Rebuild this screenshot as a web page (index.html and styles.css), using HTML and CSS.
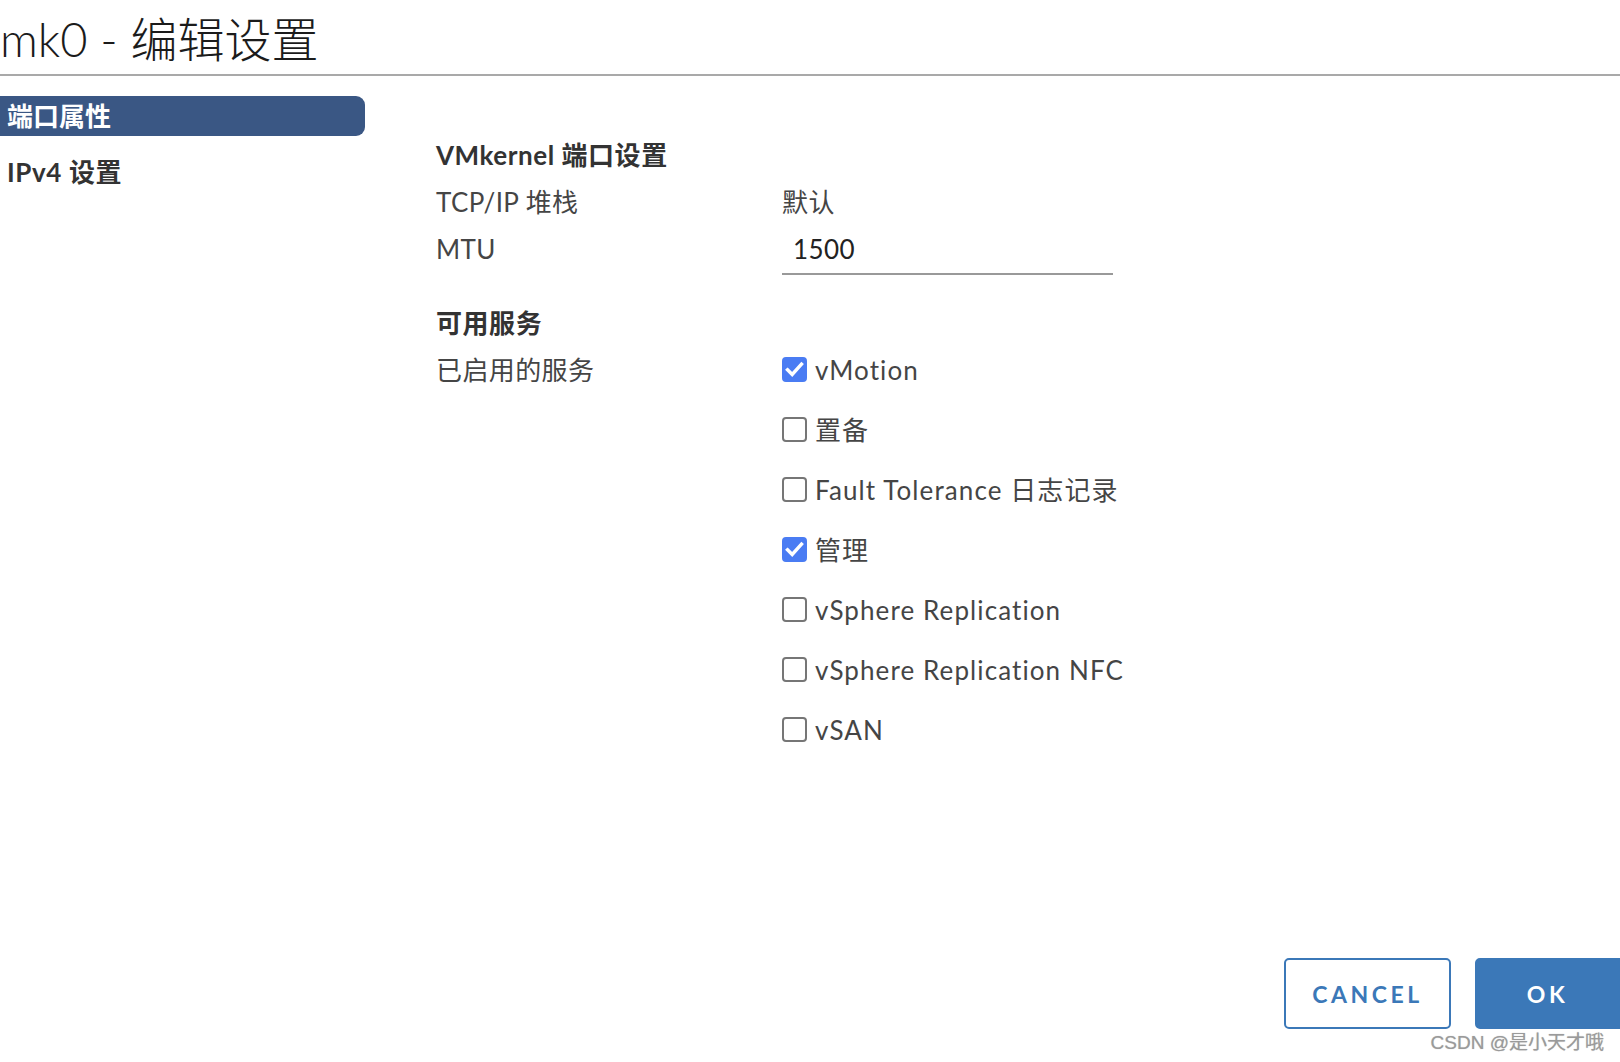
FILE: index.html
```html
<!DOCTYPE html>
<html lang="zh-CN">
<head>
<meta charset="utf-8">
<title>mk0 - 编辑设置</title>
<link rel="stylesheet" href="styles.css">
</head>
<body>
<div class="page">
  <header class="title">mk0 - 编辑设置</header>
  <div class="main">
    <nav class="side">
      <div class="nav-item active">端口属性</div>
      <div class="nav-item">IPv4 设置</div>
    </nav>
    <section class="content">
      <h2 class="sec-head">VMkernel 端口设置</h2>
      <div class="row">
        <div class="label">TCP/IP 堆栈</div>
        <div class="value">默认</div>
      </div>
      <div class="row">
        <div class="label">MTU</div>
        <div class="value"><div class="input">1500</div></div>
      </div>
      <h2 class="sec-head second">可用服务</h2>
      <div class="row">
        <div class="label">已启用的服务</div>
        <div class="value">
          <ul class="checks">
            <li><span class="cb on"><svg viewBox="0 0 25 25" width="25" height="25"><path d="M5.5 12.8 L10.2 17.5 L19.5 7.2" fill="none" stroke="#fff" stroke-width="3.4" stroke-linecap="square"/></svg></span>vMotion</li>
            <li><span class="cb"></span>置备</li>
            <li><span class="cb"></span>Fault Tolerance 日志记录</li>
            <li><span class="cb on"><svg viewBox="0 0 25 25" width="25" height="25"><path d="M5.5 12.8 L10.2 17.5 L19.5 7.2" fill="none" stroke="#fff" stroke-width="3.4" stroke-linecap="square"/></svg></span>管理</li>
            <li><span class="cb"></span>vSphere Replication</li>
            <li><span class="cb"></span>vSphere Replication NFC</li>
            <li><span class="cb"></span>vSAN</li>
          </ul>
        </div>
      </div>
    </section>
  </div>
  <footer class="footer">
    <button class="btn btn-outline">CANCEL</button>
    <button class="btn btn-primary">OK</button>
  </footer>
  <div class="watermark">CSDN @是小天才哦</div>
</div>
</body>
</html>
```
FILE: styles.css
```css
* { box-sizing: border-box; }
html, body { margin: 0; padding: 0; background: #fff; }
body {
  font-family: "Lato", "Noto Sans CJK SC", sans-serif;
  color: #454545;
}
.page {
  position: relative;
  height: 1062px;
  width: 1620px;
  display: flex;
  flex-direction: column;
  overflow: hidden;
}
.title {
  height: 76px;
  border-bottom: 2px solid #a9a9a9;
  font-size: 47px;
  font-weight: 300;
  line-height: 78px;
  color: #1b1b1b;
  padding-left: 0;
  white-space: nowrap;
}
.main {
  display: grid;
  grid-template-columns: 365px 1fr;
  column-gap: 71px;
  flex: 1;
}
.side {
  padding-top: 20px;
  display: flex;
  flex-direction: column;
  gap: 16px;
}
.nav-item {
  height: 40px;
  line-height: 40px;
  padding-left: 7px;
  font-size: 26px;
  font-weight: 700;
  color: #333;
  letter-spacing: 0.6px;
}
.nav-item.active {
  background: #3a5784;
  color: #fff;
  border-radius: 0 9px 9px 0;
  letter-spacing: 0;
}
.content {
  padding-top: 56px;
}
.sec-head {
  margin: 0;
  height: 47px;
  line-height: 47px;
  font-size: 26px;
  font-weight: 700;
  color: #333;
  letter-spacing: 0.55px;
}
.sec-head.second { margin-top: 25px; }
.row {
  display: grid;
  grid-template-columns: 346px 1fr;
  align-items: start;
}
.label, .value {
  font-size: 26px;
  line-height: 47px;
  color: #454545;
  white-space: nowrap;
  letter-spacing: 0.4px;
}
.input {
  width: 331px;
  height: 49px;
  line-height: 47px;
  padding-left: 11px;
  border-bottom: 2px solid #999;
  color: #222;
}
.checks {
  list-style: none;
  margin: 0;
  padding: 0;
  display: flex;
  flex-direction: column;
  gap: 13px;
}
.checks li {
  height: 47px;
  display: flex;
  align-items: center;
  gap: 8px;
  font-size: 26px;
  color: #454545;
  letter-spacing: 1.1px;
}
.cb {
  width: 25px;
  height: 25px;
  border: 2px solid #767676;
  border-radius: 4px;
  flex: none;
  display: inline-flex;
  align-items: center;
  justify-content: center;
  background: #fff;
  margin-top: -3px;
}
.cb.on {
  background: #4a7cf3;
  border-color: #4a7cf3;
}
.cb svg { display: block; margin: -2px; }
.footer {
  display: flex;
  justify-content: flex-end;
  gap: 24px;
  padding-bottom: 33px;
}
.btn {
  height: 71px;
  border-radius: 5px;
  font-family: "Lato", sans-serif;
  font-size: 23px;
  font-weight: 700;
  letter-spacing: 3.5px;
  cursor: pointer;
}
.btn-outline {
  width: 167px;
  background: #fff;
  border: 2px solid #3b78b8;
  color: #3b78b8;
}
.btn-primary {
  width: 145px;
  background: #3b78b8;
  border: 2px solid #3b78b8;
  color: #fff;
  border-radius: 5px 0 0 5px;
}
.watermark {
  position: absolute;
  right: 16px;
  bottom: 8px;
  font-family: "Liberation Sans", "Noto Sans CJK SC", sans-serif;
  font-size: 19px;
  color: #9a9a9a;
  text-shadow: 0 0 1px #bbb;
}
```
